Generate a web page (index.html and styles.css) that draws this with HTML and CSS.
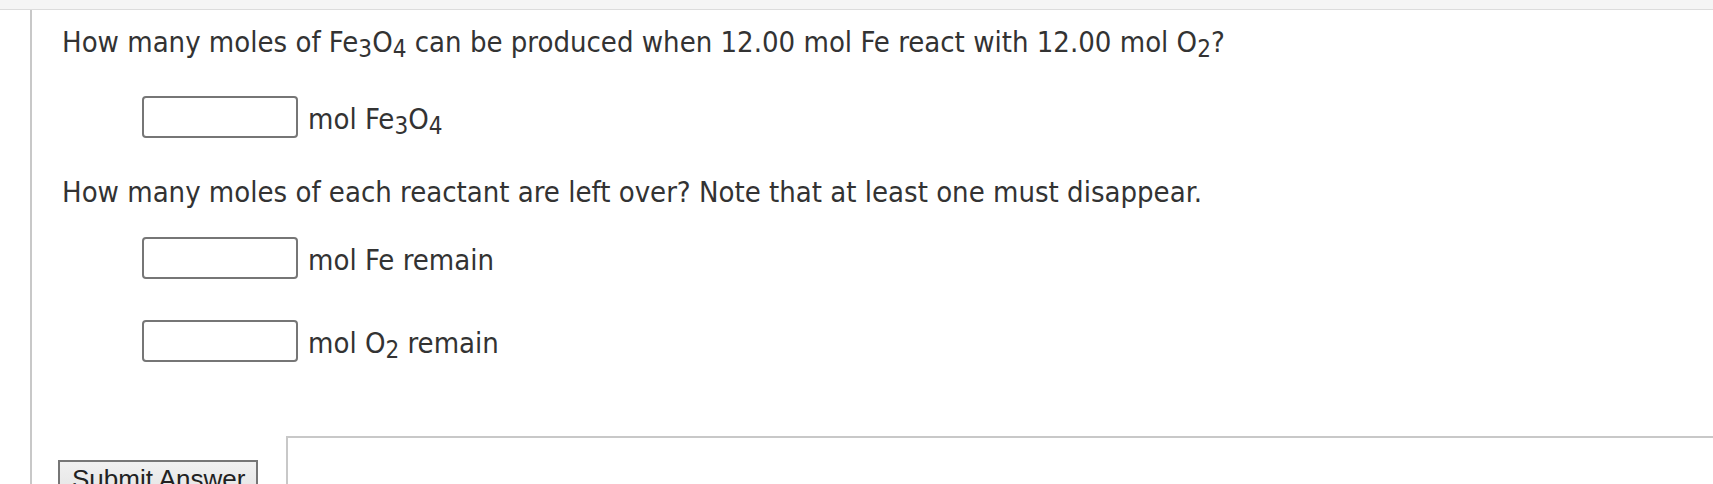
FILE: index.html
```html
<!DOCTYPE html>
<html lang="en">
<head>
  <meta charset="UTF-8">
  <title>Limiting Reactant</title>
  <link rel="stylesheet" href="styles.css">
</head>
<body>
  <div class="topbar"></div>
  <div class="container">
    <p class="question q1">How many moles of Fe<sub>3</sub>O<sub>4</sub> can be produced when 12.00 mol Fe react with 12.00 mol O<sub>2</sub>?</p>

    <div class="answer a1">
      <input type="text" class="answer-box">
      <span class="unit">mol Fe<sub>3</sub>O<sub>4</sub></span>
    </div>

    <p class="question q2">How many moles of each reactant are left over? Note that at least one must disappear.</p>

    <div class="answer a2">
      <input type="text" class="answer-box">
      <span class="unit">mol Fe remain</span>
    </div>
    <div class="answer a3">
      <input type="text" class="answer-box">
      <span class="unit">mol O<sub>2</sub> remain</span>
    </div>

    <div class="submit-row">
      <button class="submit">Submit Answer</button>
      <div class="feedback"></div>
    </div>
  </div>
</body>
</html>
```

FILE: styles.css
```css
body {
  margin: 0;
  font-family: "DejaVu Sans Condensed", "DejaVu Sans", Verdana, sans-serif;
  font-stretch: condensed;
  color: #333;
  background: #fff;
  overflow: hidden;
}
.topbar {
  height: 9px;
  background: #f5f5f5;
  border-bottom: 1px solid #dcdcdc;
}
.container {
  margin-left: 30px;
  border-left: 2px solid #c8c8c8;
  padding-top: 12px;
  height: 600px;
}
.question {
  margin: 0 0 0 30px;
  font-size: 29px;
  line-height: 40px;
}
sub {
  font-size: 0.83em;
  line-height: 0;
  vertical-align: -0.22em;
}
.answer {
  display: flex;
  align-items: center;
  height: 42px;
  margin-left: 110px;
  font-size: 29px;
}
.answer-box {
  box-sizing: border-box;
  width: 156px;
  height: 42px;
  margin: 0;
  border: 2px solid #767676;
  border-radius: 4px;
  background: #fff;
}
.unit {
  margin-left: 10px;
  padding-top: 4px;
  line-height: 34px;
}
.a1 { margin-top: 34px; }
.q2 { margin-top: 34px; }
.a2 { margin-top: 25px; }
.a3 { margin-top: 41px; }
.submit-row {
  display: flex;
  align-items: flex-start;
  margin-top: 74px;
  margin-left: 26px;
}
.submit {
  margin-top: 24px;
  width: 200px;
  padding: 3px 0 8px 12px;
  text-align: left;
  font-family: "Liberation Sans", Arial, sans-serif;
  font-stretch: normal;
  font-size: 26px;
  line-height: 28px;
  color: #222;
  border: 2px solid #767676;
  background: linear-gradient(#f0f0f0, #e3e3e3);
}
.feedback {
  flex: 1;
  margin-left: 28px;
  height: 120px;
  border-top: 2px solid #c8c8c8;
  border-left: 2px solid #c8c8c8;
}
```
